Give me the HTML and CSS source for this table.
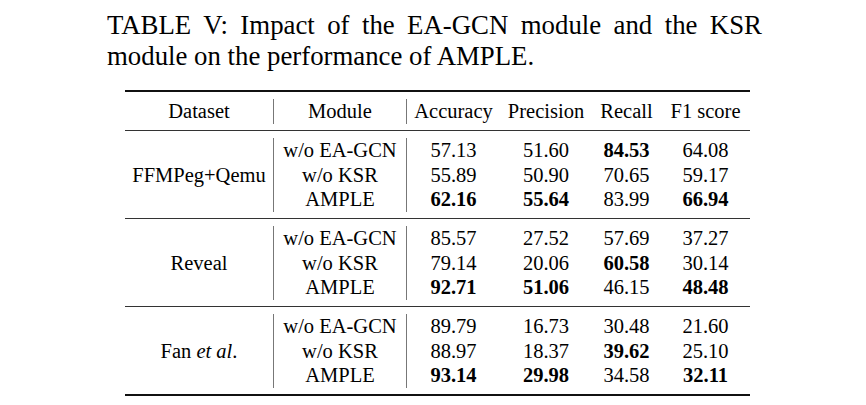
FILE: index.html
```html
<!DOCTYPE html>
<html>
<head>
<meta charset="utf-8">
<link rel="stylesheet" href="styles.css">
</head>
<body>
<p class="caption">TABLE V: Impact of the EA-GCN module and the KSR module on the performance of AMPLE.</p>
<div class="tbl">
  <div class="rule thick"></div>
  <div class="sec">
    <div class="cell bar">Dataset</div>
    <div class="cell bar">Module</div>
    <div class="cell">Accuracy</div>
    <div class="cell">Precision</div>
    <div class="cell">Recall</div>
    <div class="cell">F1 score</div>
  </div>
  <div class="rule"></div>
  <div class="sec">
    <div class="cell bar ds"><span>FFMPeg+Qemu</span></div>
    <div class="cell bar">w/o EA-GCN</div><div class="cell">57.13</div><div class="cell">51.60</div><div class="cell b">84.53</div><div class="cell">64.08</div>
    <div class="cell bar">w/o KSR</div><div class="cell">55.89</div><div class="cell">50.90</div><div class="cell">70.65</div><div class="cell">59.17</div>
    <div class="cell bar">AMPLE</div><div class="cell b">62.16</div><div class="cell b">55.64</div><div class="cell">83.99</div><div class="cell b">66.94</div>
  </div>
  <div class="rule"></div>
  <div class="sec">
    <div class="cell bar ds"><span>Reveal</span></div>
    <div class="cell bar">w/o EA-GCN</div><div class="cell">85.57</div><div class="cell">27.52</div><div class="cell">57.69</div><div class="cell">37.27</div>
    <div class="cell bar">w/o KSR</div><div class="cell">79.14</div><div class="cell">20.06</div><div class="cell b">60.58</div><div class="cell">30.14</div>
    <div class="cell bar">AMPLE</div><div class="cell b">92.71</div><div class="cell b">51.06</div><div class="cell">46.15</div><div class="cell b">48.48</div>
  </div>
  <div class="rule"></div>
  <div class="sec">
    <div class="cell bar ds"><span>Fan <i>et al</i>.</span></div>
    <div class="cell bar">w/o EA-GCN</div><div class="cell">89.79</div><div class="cell">16.73</div><div class="cell">30.48</div><div class="cell">21.60</div>
    <div class="cell bar">w/o KSR</div><div class="cell">88.97</div><div class="cell">18.37</div><div class="cell b">39.62</div><div class="cell">25.10</div>
    <div class="cell bar">AMPLE</div><div class="cell b">93.14</div><div class="cell b">29.98</div><div class="cell">34.58</div><div class="cell b">32.11</div>
  </div>
  <div class="rule thick"></div>
</div>
</body>
</html>
```
FILE: styles.css
```css
html, body {
  margin: 0;
  padding: 0;
  background: #fff;
  color: #000;
  font-family: "Liberation Serif", "Times New Roman", serif;
}
.caption {
  margin: 10px 0 0 107px;
  width: 655px;
  font-size: 26.8px;
  line-height: 31px;
  text-align: justify;
}
.tbl {
  margin: 18px 0 0 125px;
  width: 625px;
  font-size: 20.5px;
  line-height: 24.5px;
}
.rule {
  height: 1px;
  background: #333;
}
.rule.thick {
  height: 2px;
  background: #111;
}
.sec {
  display: grid;
  grid-template-columns: 149px 133px 93px 92px 69px 89px;
  padding: 7px 0 6.5px;
}
.cell {
  text-align: center;
  white-space: nowrap;
}
.bar {
  border-right: 1.6px solid #777;
}
.ds {
  grid-row: span 3;
  display: flex;
  align-items: center;
  justify-content: center;
}
.b {
  font-weight: bold;
}
```
